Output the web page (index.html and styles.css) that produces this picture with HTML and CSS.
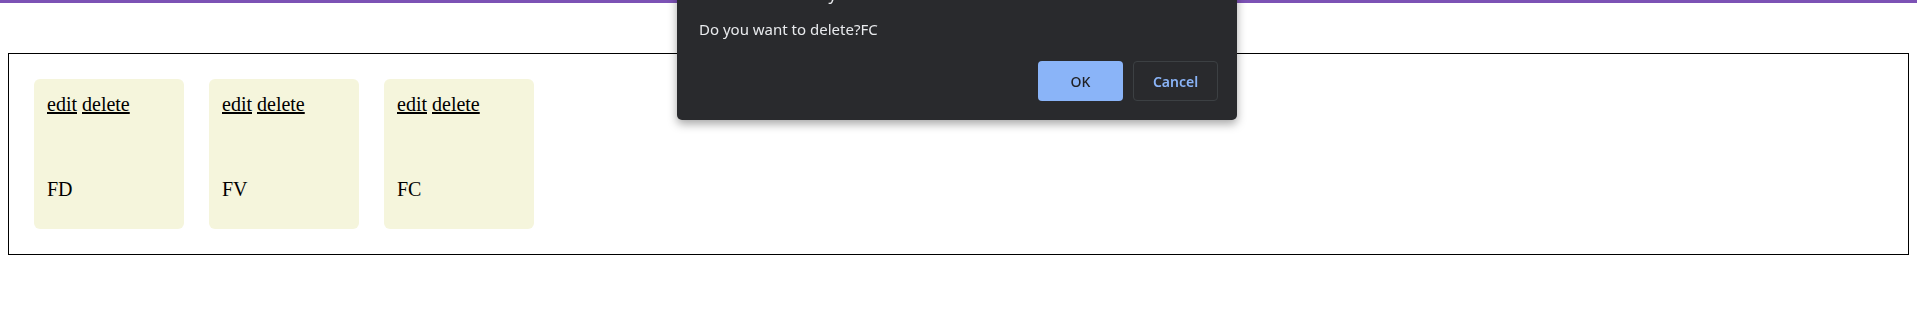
FILE: index.html
```html
<!DOCTYPE html>
<html lang="en">
<head>
    <meta charset="UTF-8" />
    <meta name="viewport" content="width=device-width, initial-scale=1.0" />
    <title>Notes</title>
    <link rel="stylesheet" href="styles.css">
</head>
<body>
<div class="top-bar"></div>

<div class="board">
    <div class="card">
        <div class="card-actions"><a href="#">edit</a> <a href="#">delete</a></div>
        <div class="card-name">FD</div>
    </div>
    <div class="card">
        <div class="card-actions"><a href="#">edit</a> <a href="#">delete</a></div>
        <div class="card-name">FV</div>
    </div>
    <div class="card">
        <div class="card-actions"><a href="#">edit</a> <a href="#">delete</a></div>
        <div class="card-name">FC</div>
    </div>
</div>

<div class="dialog">
    <div class="dialog-title">127.0.0.1:5500 says</div>
    <div class="dialog-message">Do you want to delete?FC</div>
    <div class="dialog-buttons">
        <button class="btn btn-ok">OK</button>
        <button class="btn btn-cancel">Cancel</button>
    </div>
</div>
</body>
</html>
```

FILE: styles.css
```css
body {
    margin: 8px;
    font-family: "Liberation Serif", "Times New Roman", serif;
    font-size: 20px;
    color: #000;
    background-color: #fff;
}

.top-bar {
    position: fixed;
    top: 0;
    left: 0;
    right: 0;
    height: 3px;
    background-color: #7c52b5;
}

.board {
    margin-top: 45px;
    border: 1px solid #000;
    padding: 25px;
    display: flex;
    gap: 25px;
}

.card {
    width: 150px;
    height: 150px;
    box-sizing: border-box;
    padding: 14px 13px;
    background-color: #f5f5dc;
    border-radius: 6px;
}

.card a {
    color: #000;
    text-decoration: underline;
}

.card-name {
    margin-top: 62px;
}

.dialog {
    position: fixed;
    top: -16px;
    left: 677px;
    width: 560px;
    box-sizing: border-box;
    padding: 0 19px 19px 22px;
    background-color: #292a2d;
    border-radius: 0 0 5px 5px;
    box-shadow: 0 4px 10px rgba(0, 0, 0, 0.35);
    font-family: "Noto Sans", "Open Sans", sans-serif;
    font-size: 14px;
    color: #e8eaed;
}

.dialog-title {
    font-size: 16px;
    line-height: 20px;
}

.dialog-message {
    margin-top: 15px;
    font-size: 15px;
    line-height: 20px;
}

.dialog-buttons {
    margin-top: 22px;
    display: flex;
    justify-content: flex-end;
    gap: 10px;
}

.btn {
    width: 85px;
    height: 40px;
    border-radius: 4px;
    font-family: "Noto Sans", "Open Sans", sans-serif;
    font-size: 14px;
    font-weight: 500;
}

.btn-ok {
    background-color: #8ab4f8;
    border: none;
    color: #202124;
}

.btn-cancel {
    background-color: transparent;
    border: 1px solid #3c4043;
    color: #8ab4f8;
    font-weight: 600;
}
```
